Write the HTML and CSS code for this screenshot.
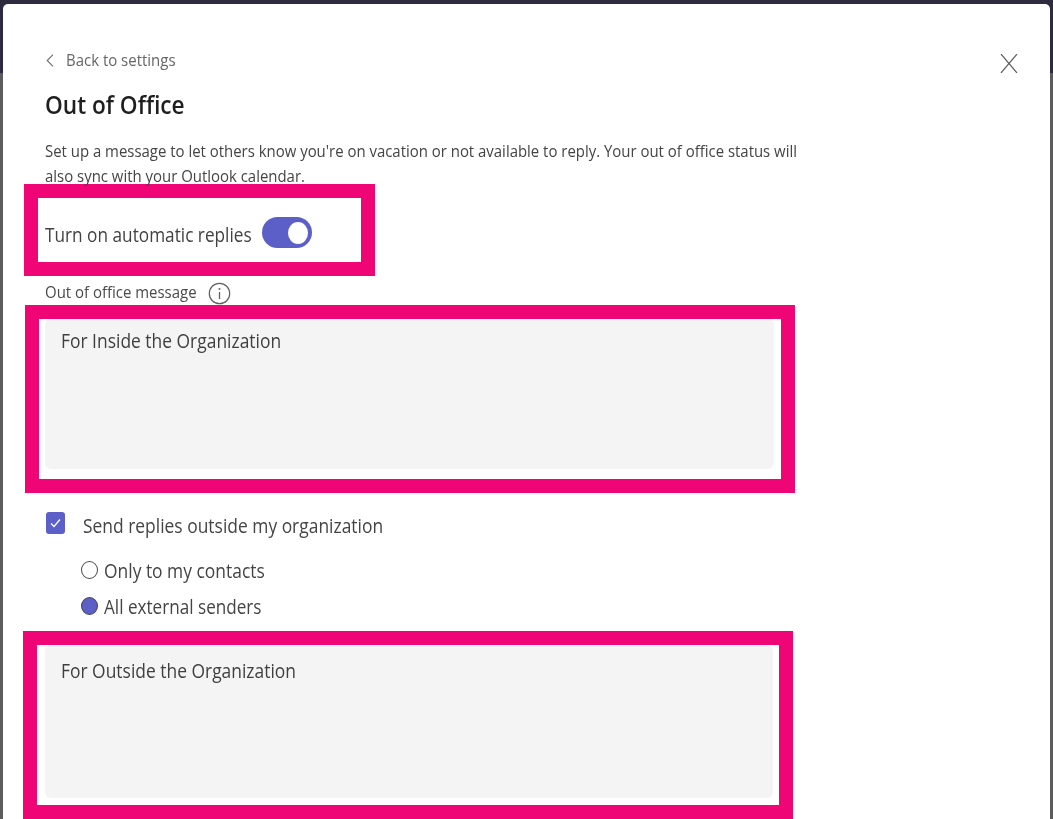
FILE: index.html
```html
<!DOCTYPE html>
<html lang="en">
<head>
<meta charset="utf-8">
<title>Out of Office</title>
<link rel="stylesheet" href="styles.css">
</head>
<body>
<main class="modal">
  <div class="top-row">
    <a class="back">
      <svg class="chevron" width="8" height="13" viewBox="0 0 8 13"><path d="M7 .7 1.2 6.5 7 12.3" fill="none" stroke="#6e6e6e" stroke-width="1.1"/></svg>
      <span class="fit back-text">Back to settings</span>
    </a>
    <svg class="close" width="18" height="19" viewBox="0 0 18 19"><path d="M1 0 17 19M17 0 1 19" fill="none" stroke="#616161" stroke-width="1.2"/></svg>
  </div>
  <h1 class="fit title">Out of Office</h1>
  <p class="fit intro">Set up a message to let others know you're on vacation or not available to reply. Your out of office status will also sync with your Outlook calendar.</p>

  <div class="mark mark-toggle">
    <span class="fit toggle-label">Turn on automatic replies</span>
    <span class="toggle"><span class="knob"></span></span>
  </div>

  <div class="field-label">
    <span class="fit field-text">Out of office message</span>
    <svg class="info" width="23" height="23" viewBox="0 0 23 23"><circle cx="11.5" cy="11.5" r="10.2" fill="none" stroke="#616161" stroke-width="1.2"/><path d="M11.5 10v7" stroke="#616161" stroke-width="1.3"/><circle cx="11.5" cy="7" r="1" fill="#616161"/></svg>
  </div>

  <div class="mark mark-inside">
    <div class="message"><span class="fit message-text">For Inside the Organization</span></div>
  </div>

  <div class="check-row">
    <span class="checkbox">
      <svg width="11" height="10" viewBox="0 0 11 10"><path d="M1 5.5 4 8.5 10 1.5" fill="none" stroke="#fff" stroke-width="1.3"/></svg>
    </span>
    <span class="fit option-text">Send replies outside my organization</span>
  </div>
  <div class="radio-row radio-first"><span class="radio"></span><span class="fit option-text">Only to my contacts</span></div>
  <div class="radio-row radio-second"><span class="radio radio-on"></span><span class="fit option-text option-tight">All external senders</span></div>

  <div class="mark mark-outside">
    <div class="message"><span class="fit message-text">For Outside the Organization</span></div>
  </div>
</main>
</body>
</html>
```

FILE: styles.css
```css
* { box-sizing: border-box; }
html, body { margin: 0; height: 819px; overflow: hidden; }
body {
  background: linear-gradient(#2e2b40 0 73px, #5c5c5c 73px);
  padding: 4px 3px 0;
  font-family: "Open Sans", "Noto Sans", sans-serif;
  color: #424242;
}
.modal {
  position: relative;
  height: 815px;
  background: #fff;
  border-radius: 5px 5px 0 0;
  overflow: hidden;
}
/* The reference text is a horizontally squeezed, slightly soft capture. */
.fit {
  display: block;
  flex: none;
  white-space: nowrap;
  transform: scaleX(var(--squeeze));
  transform-origin: 0 50%;
  filter: blur(.3px);
}
.top-row {
  height: 68px;
  padding: 44px 32px 0 43px;
  display: flex;
  justify-content: space-between;
  align-items: flex-start;
}
.back {
  display: flex;
  align-items: center;
  gap: 12px;
  color: #666;
}
.back-text {
  --squeeze: .88;
  width: 109px;
  font-size: 17px;
  line-height: 24px;
}
.close { margin-top: 6px; }
.title {
  --squeeze: .87;
  margin: 12px 0 0 42px;
  height: 40px;
  font-size: 26px;
  line-height: 40px;
  font-weight: 600;
  color: #1f1f1f;
}
.intro {
  --squeeze: .905;
  margin: 14px 0 0 42px;
  width: 850px;
  height: 46px;
  white-space: normal;
  font-size: 16.5px;
  line-height: 25px;
  color: #444;
}
.mark { border: 14px solid #f00576; background: #fff; }
.mark-toggle {
  margin-left: 21px;
  width: 351px;
  height: 92px;
  padding: 0 0 0 7px;
  display: flex;
  align-items: center;
  gap: 10px;
}
.toggle-label {
  --squeeze: .84;
  width: 207px;
  font-size: 20.5px;
  line-height: 26px;
  padding-top: 7px;
}
.toggle {
  width: 50px;
  height: 31px;
  padding-right: 4px;
  margin-top: 5px;
  border-radius: 16px;
  background: #5b5fc7;
  display: flex;
  align-items: center;
  justify-content: flex-end;
}
.knob { width: 20px; height: 22px; border-radius: 50%; background: #fff; }
.field-label {
  margin-left: 42px;
  height: 29px;
  display: flex;
  align-items: center;
  gap: 11px;
  color: #4a4a4a;
}
.field-text {
  --squeeze: .88;
  width: 152px;
  font-size: 17px;
  padding-top: 2px;
}
.info { margin-top: 5px; }
.mark-inside {
  margin-left: 22px;
  width: 770px;
  height: 188px;
  padding: 0 7px 10px 6px;
}
.mark-outside {
  margin-left: 20px;
  width: 770px;
  height: 188px;
  padding: 0 6px 7px 8px;
}
.message {
  height: 100%;
  padding: 7px 16px;
  background: #f4f4f4;
  border-radius: 6px;
  color: #3f3f3f;
}
.message-text {
  --squeeze: .85;
  font-size: 20.5px;
  line-height: 28px;
}
.mark-outside .message { padding-top: 11px; }
.check-row {
  margin: 19px 0 0 43px;
  height: 22px;
  display: flex;
  align-items: center;
  gap: 18px;
  color: #444;
}
.option-text {
  --squeeze: .85;
  font-size: 20.5px;
  line-height: 26px;
}
.check-row .option-text { padding-top: 3px; }
.option-tight { --squeeze: .835; }
.checkbox {
  width: 19px;
  height: 22px;
  flex: none;
  border-radius: 3px;
  background: #5b5fc7;
  display: flex;
  align-items: center;
  justify-content: center;
}
.radio-row {
  margin-left: 78px;
  display: flex;
  align-items: center;
  gap: 6px;
  height: 18px;
  color: #444;
}
.radio-first { margin-top: 27px; }
.radio-second { margin-top: 18px; margin-bottom: 16px; }
.radio {
  width: 17px;
  height: 18px;
  flex: none;
  border: 1.5px solid #484848;
  border-radius: 50%;
  background: #fff;
}
.radio-on { background: #5b5fc7; }
```
